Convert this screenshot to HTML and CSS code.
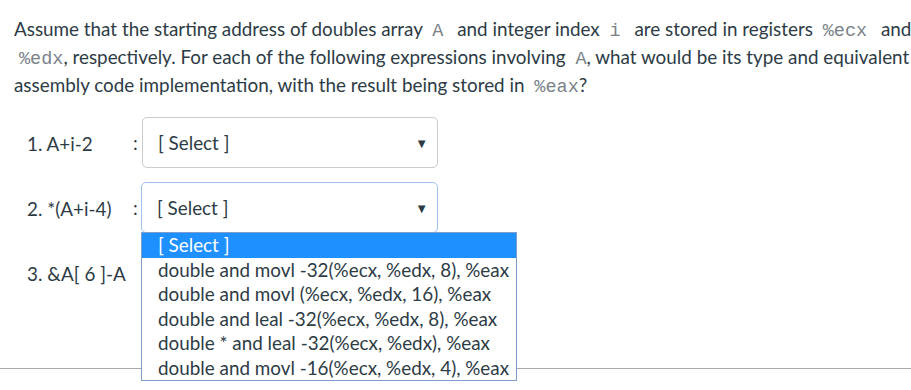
FILE: index.html
```html
<!DOCTYPE html>
<html lang="en">
<head>
  <meta charset="UTF-8" />
  <title>Question</title>
  <meta name="viewport" content="width=device-width, initial-scale=1" />
  <link rel="stylesheet" href="styles.css">
</head>
<body>
  <div class="page">
    <div class="question">
      <p class="prompt">
        Assume that the starting address of doubles array <code class="sp">A</code> and integer index <code class="sp">i</code> are stored in registers <code class="sp">%ecx</code> and
        <code>%edx</code>, respectively. For each of the following expressions involving <code>A</code>, what would be its type and equivalent
        assembly code implementation, with the result being stored in <code>%eax</code>?
      </p>

      <div class="answers">
        <div class="row">
          <span class="label">1. A+i-2</span>
          <span class="colon">:</span>
          <div class="select">
            <span>[ Select ]</span>
            <span class="arrow">&#9660;</span>
          </div>
        </div>

        <div class="row">
          <span class="label">2. *(A+i-4)</span>
          <span class="colon">:</span>
          <div class="select focused">
            <span>[ Select ]</span>
            <span class="arrow">&#9660;</span>
            <ul class="options">
              <li class="active">[ Select ]</li>
              <li>double and movl -32(%ecx, %edx, 8), %eax</li>
              <li>double and movl (%ecx, %edx, 16), %eax</li>
              <li>double and leal -32(%ecx, %edx, 8), %eax</li>
              <li>double * and leal -32(%ecx, %edx), %eax</li>
              <li>double and movl -16(%ecx, %edx, 4), %eax</li>
            </ul>
          </div>
        </div>

        <div class="row">
          <span class="label wide">3. &amp;A[ 6 ]-A</span>
          <span class="colon">:</span>
          <div class="select">
            <span>[ Select ]</span>
            <span class="arrow">&#9660;</span>
          </div>
        </div>
      </div>
    </div>
    <hr class="divider" />
  </div>
</body>
</html>
```

FILE: styles.css
```css
* {
  box-sizing: border-box;
}
html, body {
  margin: 0;
  height: 100%;
  overflow: hidden;
}
body {
  background: #fff;
  color: #2d3b45;
  font-family: Lato, "Open Sans", sans-serif;
  font-size: 18.85px;
}
.page {
  min-height: 390px;
}
.question {
  width: 940px;
  padding: 0 14px;
}
.prompt {
  margin: 15px 0 0;
  line-height: 28px;
}
code {
  font-family: "Liberation Mono", "DejaVu Sans Mono", monospace;
  font-size: 18.5px;
  line-height: 1;
  color: #7a8289;
  padding-left: 5px;
}
code.sp {
  padding-right: 9px;
}
.answers {
  margin-top: 18px;
  padding-left: 13px;
  display: flex;
  flex-direction: column;
  gap: 14px;
}
.row {
  display: flex;
  align-items: center;
}
.label {
  width: 106px;
  padding-top: 2px;
}
.label.wide {
  width: 118px;
}
.colon {
  width: 9px;
}
.select {
  position: relative;
  width: 296px;
  height: 51px;
  border: 1px solid #c7cdd1;
  border-radius: 5px;
  display: flex;
  align-items: center;
  justify-content: space-between;
  padding: 0 9px 0 15px;
}
.select.focused {
  border-color: #9fc2f3;
  margin-left: -1px;
  width: 297px;
}
.arrow {
  font-size: 13px;
  color: #2d3b45;
}
.options {
  position: absolute;
  left: -1px;
  top: 49px;
  margin: 0;
  padding: 0;
  list-style: none;
  background: #fff;
  border: 1px solid #7f9dcf;
  width: 376px;
  z-index: 2;
}
.options li {
  height: 24.5px;
  line-height: 23px;
  padding-left: 16px;
  white-space: nowrap;
}
.options li.active {
  background: #1e90ff;
  color: #fff;
}
.divider {
  margin: 70px 0 0;
  border: none;
  border-top: 1px solid #aaa;
}
```
